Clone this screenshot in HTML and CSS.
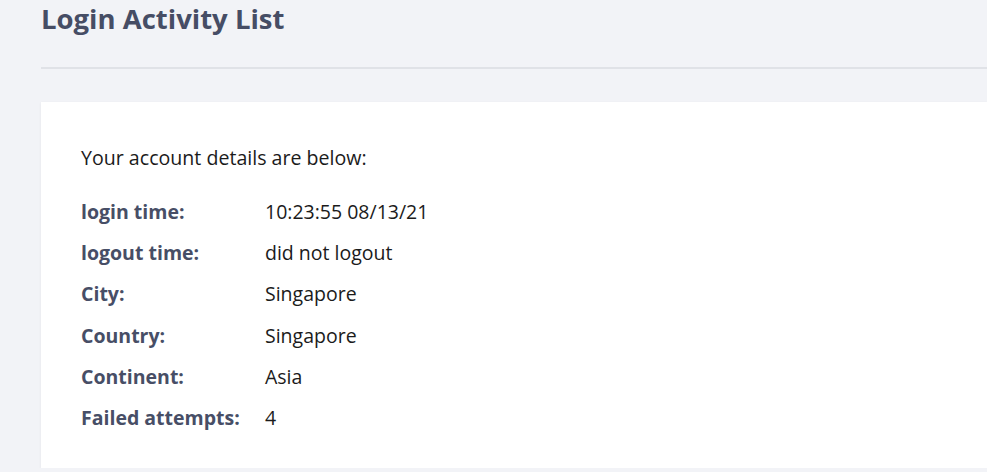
FILE: index.html
```html
<!DOCTYPE html>
<html lang="en">
<head>
<meta charset="utf-8">
<title>Login Activity List</title>
<link rel="stylesheet" href="styles.css">
</head>
<body>
<main class="page">
  <header class="page-header">
    <h1 class="page-title">Login Activity List</h1>
  </header>
  <section class="card">
    <p class="intro">Your account details are below:</p>
    <dl class="details">
      <div class="row"><dt>login time:</dt><dd>10:23:55 08/13/21</dd></div>
      <div class="row"><dt>logout time:</dt><dd>did not logout</dd></div>
      <div class="row"><dt>City:</dt><dd>Singapore</dd></div>
      <div class="row"><dt>Country:</dt><dd>Singapore</dd></div>
      <div class="row"><dt>Continent:</dt><dd>Asia</dd></div>
      <div class="row"><dt>Failed attempts:</dt><dd>4</dd></div>
    </dl>
  </section>
</main>
</body>
</html>
```
FILE: styles.css
```css
html, body {
  margin: 0;
  padding: 0;
  background: #f2f3f7;
  overflow: hidden;
}
body {
  font-family: "Open Sans", "Noto Sans", sans-serif;
  color: #1b1b1b;
}
.page {
  padding-left: 41px;
}
.page-header {
  height: 69px;
  border-bottom: 2px solid #e0e2e7;
  box-sizing: border-box;
}
.page-title {
  margin: 0;
  font-size: 27.5px;
  line-height: 38px;
  font-weight: 700;
  color: #464d65;
}
.card {
  margin-top: 33px;
  background: #ffffff;
  padding: 34px 40px 28px;
  height: 366px;
  box-sizing: border-box;
  box-shadow: 0 1px 3px rgba(0,0,0,0.06);
}
.intro {
  margin: 0 0 11px;
  font-size: 19.6px;
  line-height: 44px;
}
.details {
  margin: 0;
  display: flex;
  flex-direction: column;
}
.row {
  display: grid;
  grid-template-columns: 184px 1fr;
  height: 41.2px;
  align-items: center;
}
.row dt {
  font-weight: 700;
  color: #474e66;
  font-size: 19.5px;
}
.row dd {
  margin: 0;
  font-size: 19.5px;
}
```
